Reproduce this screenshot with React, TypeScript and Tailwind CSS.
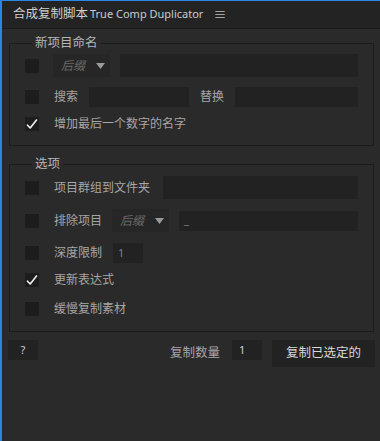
import React from "react";

const font = { fontFamily: '"Noto Sans", "Noto Sans CJK SC", sans-serif' };

function Check({ checked = false }: { checked?: boolean }) {
  return (
    <div className="w-[14px] h-[14px] bg-[#1d1d1d] shrink-0 flex items-center justify-center">
      {checked && (
        <svg width="12" height="11" viewBox="0 0 12 11" fill="none">
          <path d="M1.5 6.2 L4.2 9 L10.5 1" stroke="#f2f2f2" strokeWidth="1.6" strokeLinecap="round" strokeLinejoin="round" />
        </svg>
      )}
    </div>
  );
}

function Dropdown({ className = "" }: { className?: string }) {
  return (
    <div className={`h-[23px] w-[57px] bg-[#262626] flex items-center justify-between pl-[8px] pr-[5px] ${className}`}>
      <span className="text-[12px] text-[#6a6a6a] italic">后缀</span>
      <svg width="9" height="6" viewBox="0 0 9 6">
        <path d="M0 0 H9 L4.5 6 Z" fill="#9a9a9a" />
      </svg>
    </div>
  );
}

function Field({ className = "", value = "" }: { className?: string; value?: string }) {
  return (
    <div className={`bg-[#222222] flex items-center pl-[5px] text-[11px] text-[#808080] ${className}`}>
      {value}
    </div>
  );
}

export default function App() {
  return (
    <div
      className="min-h-screen bg-[#2a2a2a] border-t border-l-2 border-[#2a86e6] text-[12px] text-[#a6a6a6] flex flex-col"
      style={font}
    >
      {/* Header */}
      <div className="h-[28px] bg-[#232323] border-b border-[#1b1b1b] flex items-center pl-[11px] text-[#cfcfcf]">
        <span className="text-[12.5px]">合成复制脚本</span>
        <span className="ml-[2px] text-[11px] text-[#c6cbd3]">True Comp Duplicator</span>
        <span className="ml-[10px] text-[13px] text-[#bdbdbd]">≡</span>
      </div>

      <div className="pl-[7px] pr-[6px]">
        {/* 新项目命名 */}
        <fieldset className="mt-[6px] border border-[#1c1c1c] pl-[15px] pr-[15px] pb-[11px]">
          <legend className="ml-[7px] px-[3px] text-[12.5px] leading-[16px] text-[#b5b5b5]">新项目命名</legend>
          <div className="mt-[3px] h-[23px] flex items-center">
            <Check />
            <Dropdown className="ml-[14px]" />
            <Field className="ml-[10px] flex-1 h-[23px]" />
          </div>
          <div className="mt-[9px] h-[22px] flex items-center">
            <Check />
            <span className="ml-[15px] w-[35px]">搜索</span>
            <Field className="w-[100px] h-[20px]" />
            <span className="ml-[11px] w-[35px]">替换</span>
            <Field className="flex-1 h-[20px]" />
          </div>
          <div className="mt-[6px] h-[20px] flex items-center">
            <Check checked />
            <span className="ml-[15px]">增加最后一个数字的名字</span>
          </div>
        </fieldset>

        {/* 选项 */}
        <fieldset className="mt-[10px] border border-[#1c1c1c] pl-[15px] pr-[15px] pb-[12px]">
          <legend className="ml-[7px] px-[3px] text-[12.5px] leading-[16px] text-[#b5b5b5]">选项</legend>
          <div className="mt-[4px] h-[23px] flex items-center">
            <Check />
            <span className="ml-[15px] w-[109px]">项目群组到文件夹</span>
            <Field className="flex-1 h-[23px]" />
          </div>
          <div className="mt-[10px] h-[23px] flex items-center">
            <Check />
            <span className="ml-[15px] w-[58px]">排除项目</span>
            <Dropdown />
            <Field className="ml-[10px] flex-1 h-[20px]" value="_" />
          </div>
          <div className="mt-[11px] h-[20px] flex items-center">
            <Check />
            <span className="ml-[15px] w-[59px]">深度限制</span>
            <Field className="w-[30px] h-[20px]" value="1" />
          </div>
          <div className="mt-[7px] h-[20px] flex items-center">
            <Check checked />
            <span className="ml-[15px]">更新表达式</span>
          </div>
          <div className="mt-[9px] h-[20px] flex items-center">
            <Check />
            <span className="ml-[15px]">缓慢复制素材</span>
          </div>
        </fieldset>

        {/* Footer */}
        <div className="mt-[8px] flex items-start">
          <div className="-ml-[1px] w-[30px] h-[20px] bg-[#222222] flex items-center justify-center text-[11px] text-[#c8d0dc]">?</div>
          <span className="ml-auto mt-[4px] text-[12.5px]">复制数量</span>
          <div className="ml-[12px] w-[30px] h-[20px] bg-[#222222] flex items-center pl-[7px] text-[11px] text-[#d0d0d0]">1</div>
          <div className="ml-[10px] -mr-[1px] w-[103px] h-[27px] bg-[#222222] flex items-center justify-center text-[12.5px] text-[#d8d8d8]">
            复制已选定的
          </div>
        </div>
      </div>
    </div>
  );
}
